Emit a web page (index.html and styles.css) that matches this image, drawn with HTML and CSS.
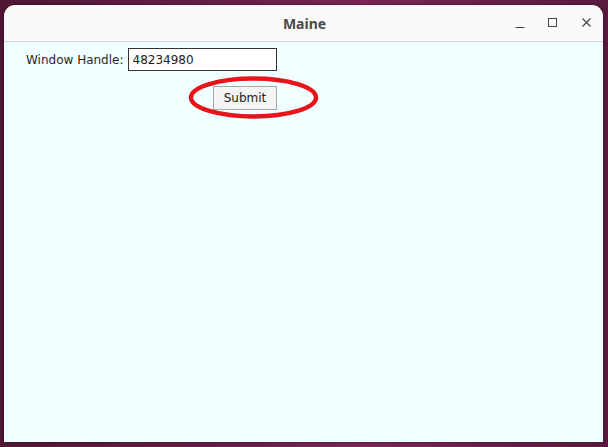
FILE: index.html
```html
<!DOCTYPE html>
<html lang="en">
<head>
    <meta charset="UTF-8">
    <meta name="viewport" content="width=device-width, initial-scale=1.0">
    <title>Maine</title>
    <link rel="stylesheet" href="styles.css">
</head>
<body>

    <div class="window">
        <div class="titlebar">
            <span class="title">Maine</span>
            <div class="controls">
                <svg class="ctl min" width="12" height="12" viewBox="0 0 12 12"><path d="M1.5 10.5 H10.5" stroke="#444" stroke-width="1"/></svg>
                <svg class="ctl" width="12" height="12" viewBox="0 0 12 12"><rect x="1.5" y="1.5" width="8" height="8" fill="none" stroke="#444" stroke-width="1"/></svg>
                <svg class="ctl" width="12" height="12" viewBox="0 0 12 12"><path d="M1.5 1.5 L9.5 9.5 M9.5 1.5 L1.5 9.5" stroke="#444" stroke-width="1.2"/></svg>
            </div>
        </div>
        <div class="content">
            <div class="form-row">
                <label for="handle">Window Handle:</label>
                <input id="handle" type="text" value="48234980">
            </div>
            <div class="button-row">
                <button type="button">Submit</button>
                <svg class="circle" width="134" height="46" viewBox="0 0 134 46">
                    <ellipse cx="66.5" cy="22.5" rx="62.5" ry="19" fill="none" stroke="#e8141c" stroke-width="4.5"/>
                </svg>
            </div>
        </div>
    </div>

</body>
</html>
```

FILE: styles.css
```css
body {
    margin: 0;
    padding: 0;
    width: 608px;
    height: 447px;
    overflow: hidden;
    background: linear-gradient(90deg, #4f1735 0%, #6a1f4a 40%, #7a2656 60%, #5a1a3e 100%);
    font-family: 'DejaVu Sans', sans-serif;
}
.window {
    margin: 5px 0 0 4px;
    width: 599px;
    height: 437px;
    display: flex;
    flex-direction: column;
    border-radius: 11px 11px 0 0;
    overflow: hidden;
    box-shadow: 0 0 3px rgba(0, 0, 0, 0.5);
}
.titlebar {
    height: 36px;
    flex: none;
    position: relative;
    display: flex;
    align-items: center;
    justify-content: center;
    background-color: #fafafa;
    border-bottom: 1px solid #d4d4d4;
}
.title {
    font-family: 'Noto Sans', sans-serif;
    font-weight: bold;
    font-size: 14px;
    color: #4a4a4a;
    margin-left: 2px;
}
.controls {
    position: absolute;
    right: 10px;
    top: 12px;
    display: flex;
    gap: 22px;
}
.min {
    margin-right: -1px;
}
.content {
    flex: 1;
    background-color: #f0ffff;
    padding: 6px 0 0 22px;
}
.form-row {
    display: flex;
    align-items: center;
    gap: 4px;
}
label {
    font-size: 12px;
    color: #2a2a2a;
}
input {
    width: 139px;
    height: 21px;
    box-sizing: content-box;
    padding: 0 4px;
    margin: 0;
    border: 1px solid #333;
    font-family: 'DejaVu Sans', sans-serif;
    font-size: 12px;
    color: #222;
    background-color: #fff;
    outline: none;
}
.button-row {
    position: relative;
    margin: 15px 0 0 187px;
    width: 64px;
}
button {
    width: 64px;
    height: 24px;
    padding: 0;
    font-family: 'DejaVu Sans', sans-serif;
    font-size: 12px;
    color: #222;
    background-color: #f4f4f4;
    border: 1px solid #a8a8a8;
    border-radius: 0;
}
.circle {
    position: absolute;
    left: -26px;
    top: -11px;
}
```
